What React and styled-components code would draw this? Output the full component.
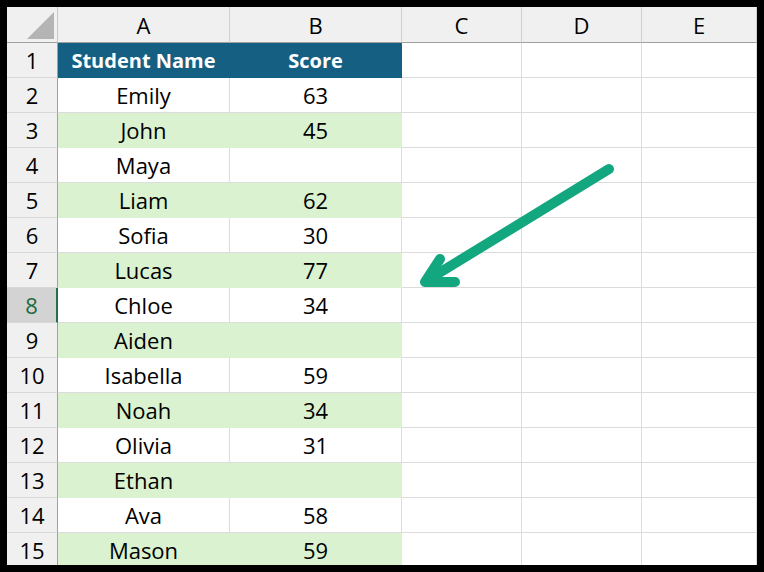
import React from "react";
import styled, { createGlobalStyle, css } from "styled-components";

const GlobalStyle = createGlobalStyle`
    html, body {
        margin: 0;
        padding: 0;
        background: #000;
    }
`;

const Frame = styled.div`
    width: 764px;
    height: 572px;
    box-sizing: border-box;
    border: 7px solid #000;
    background: #fff;
    overflow: hidden;
`;

const Sheet = styled.div`
    position: relative;
    display: grid;
    grid-template-columns: 51px 172px 172px 120px 120px 1fr;
    grid-template-rows: 36px;
    grid-auto-rows: 35px;
    height: 558px;
    overflow: hidden;
    font-family: "Open Sans", "Noto Sans", sans-serif;
    color: #000;
`;

const Corner = styled.div`
    position: relative;
    background: #f0f0f0;
    border-right: 1px solid #c8c8c8;
    border-bottom: 1px solid #a0a0a0;
    box-sizing: border-box;

    &::after {
        content: "";
        position: absolute;
        right: 3px;
        bottom: 3px;
        width: 27px;
        height: 27px;
        background: #b4b4b4;
        clip-path: polygon(100% 0, 100% 100%, 0 100%);
    }
`;

const ColHead = styled.div`
    display: flex;
    align-items: center;
    justify-content: center;
    background: #f0f0f0;
    border-right: 1px solid #d0d0d0;
    border-bottom: 1px solid #a0a0a0;
    box-sizing: border-box;
    font-size: 22px;
`;

const RowHead = styled.div`
    display: flex;
    align-items: center;
    justify-content: center;
    background: #f0f0f0;
    border-right: 1px solid #a0a0a0;
    border-bottom: 1px solid #d8d8d8;
    box-sizing: border-box;
    font-size: 22px;

    ${(props) =>
        props.selected &&
        css`
            background: #d3d3d3;
            color: #1e6b40;
            border-right: 2px solid #217346;
        `}
`;

const Cell = styled.div`
    display: flex;
    align-items: center;
    justify-content: center;
    background: #fff;
    border-right: 1px solid #dcdcdc;
    border-bottom: 1px solid #dcdcdc;
    box-sizing: border-box;
    font-size: 22px;

    ${(props) =>
        props.band &&
        css`
            background: #daf2d0;
            border-right-color: #daf2d0;
            border-bottom-color: #daf2d0;
        `}
    ${(props) =>
        props.head &&
        css`
            background: #156082;
            border-right-color: #156082;
            border-bottom-color: #156082;
            color: #fff;
            font-weight: 700;
            font-size: 20px;
        `}
`;

const Arrow = styled.svg`
    position: absolute;
    left: 0;
    top: 0;
    width: 750px;
    height: 558px;
    pointer-events: none;
`;

const columns = ["A", "B", "C", "D", "E"];

const students = [
    ["Emily", "63"],
    ["John", "45"],
    ["Maya", ""],
    ["Liam", "62"],
    ["Sofia", "30"],
    ["Lucas", "77"],
    ["Chloe", "34"],
    ["Aiden", ""],
    ["Isabella", "59"],
    ["Noah", "34"],
    ["Olivia", "31"],
    ["Ethan", ""],
    ["Ava", "58"],
    ["Mason", "59"],
];

export default function App() {
    return (
        <>
            <GlobalStyle />
            <Frame>
                <Sheet>
                    <Corner />
                    {columns.map((c) => (
                        <ColHead key={c}>{c}</ColHead>
                    ))}

                    <RowHead>1</RowHead>
                    <Cell head>Student Name</Cell>
                    <Cell head>Score</Cell>
                    <Cell />
                    <Cell />
                    <Cell />

                    {students.map(([name, score], i) => {
                        const row = i + 2;
                        const band = row % 2 === 1;
                        return (
                            <React.Fragment key={row}>
                                <RowHead selected={row === 8}>{row}</RowHead>
                                <Cell band={band}>{name}</Cell>
                                <Cell band={band}>{score}</Cell>
                                <Cell />
                                <Cell />
                                <Cell />
                            </React.Fragment>
                        );
                    })}

                    <Arrow viewBox="7 7 750 558">
                        <g
                            fill="none"
                            stroke="#12a77e"
                            strokeWidth="10"
                            strokeLinecap="round"
                            strokeLinejoin="round">
                            <line x1="609" y1="169" x2="426" y2="281" />
                            <polyline points="440,259 425,282 455,282" />
                        </g>
                    </Arrow>
                </Sheet>
            </Frame>
        </>
    );
}
